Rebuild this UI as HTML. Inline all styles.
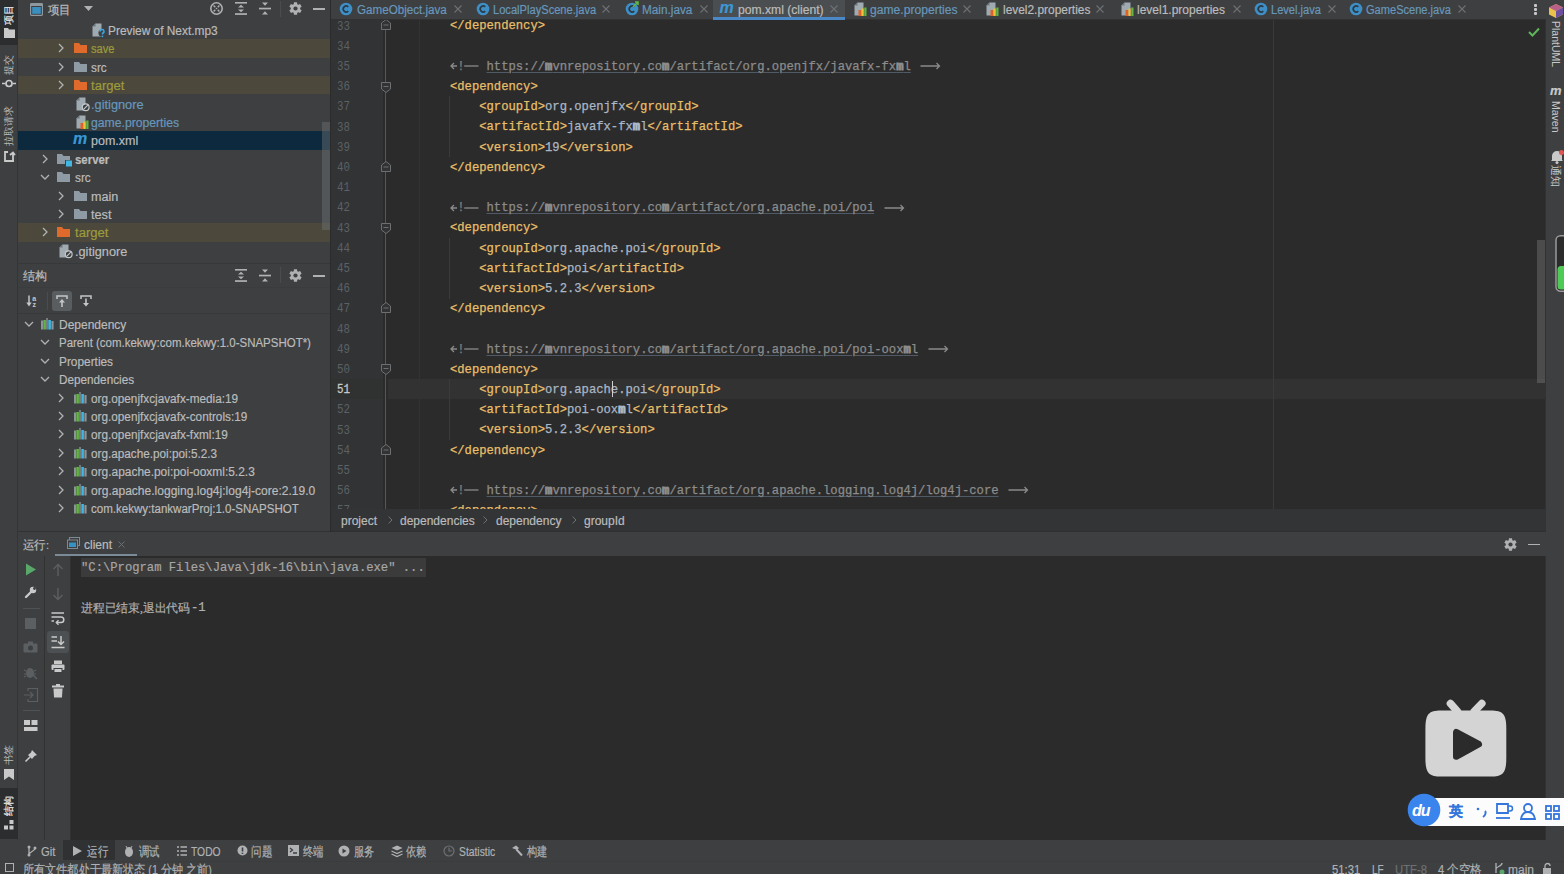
<!DOCTYPE html><html><head><meta charset="utf-8"><style>
html,body{margin:0;padding:0;}
body{width:1564px;height:874px;overflow:hidden;position:relative;background:#2b2b2b;font-family:'Liberation Sans', sans-serif;}
.t{position:absolute;white-space:pre;line-height:18px;-webkit-text-stroke:0.2px currentColor;}
svg{overflow:visible}
.mb{-webkit-text-stroke:1.1px currentColor;}
</style></head><body>
<div style="position:absolute;left:0px;top:0px;width:18px;height:840px;background:#3d3f41;"></div>
<div style="position:absolute;left:17px;top:0px;width:1px;height:840px;background:#333537;"></div>
<div style="position:absolute;left:0px;top:0px;width:18px;height:45px;background:#2b2d2f;"></div>
<div style="position:absolute;left:0px;top:788px;width:18px;height:51px;background:#2b2d2f;"></div>
<div style="position:absolute;left:18px;top:0px;width:312px;height:532px;background:#3d3f41;"></div>
<div style="position:absolute;left:330px;top:0px;width:1px;height:532px;background:#2b2b2b;"></div>
<div style="position:absolute;left:1546px;top:0px;width:18px;height:840px;background:#3d3f41;"></div>
<div style="position:absolute;left:1545px;top:0px;width:1px;height:840px;background:#323232;"></div>
<div style="position:absolute;left:331px;top:0px;width:1215px;height:20px;background:#3d3f41;"></div>
<div style="position:absolute;left:331px;top:19px;width:1215px;height:1px;background:#323232;"></div>
<div style="position:absolute;left:331px;top:20px;width:52px;height:489px;background:#313335;"></div>
<div style="position:absolute;left:419px;top:20px;width:1px;height:489px;background:#333333;"></div>
<div style="position:absolute;left:331px;top:509px;width:1215px;height:23px;background:#323436;"></div>
<div style="position:absolute;left:18px;top:532px;width:1528px;height:24px;background:#3d3f41;"></div>
<div style="position:absolute;left:18px;top:531px;width:312px;height:1px;background:#303234;"></div>
<div style="position:absolute;left:331px;top:531px;width:1215px;height:1px;background:#2e3032;"></div>
<div style="position:absolute;left:18px;top:556px;width:26px;height:284px;background:#3d3f41;"></div>
<div style="position:absolute;left:44px;top:556px;width:27px;height:284px;background:#3d3f41;"></div>
<div style="position:absolute;left:44px;top:556px;width:1px;height:284px;background:#323232;"></div>
<div style="position:absolute;left:70px;top:556px;width:1px;height:284px;background:#323232;"></div>
<div style="position:absolute;left:0px;top:840px;width:1564px;height:20px;background:#3d3f41;"></div>
<div style="position:absolute;left:0px;top:860px;width:1564px;height:14px;background:#3d3f41;"></div>
<div style="position:absolute;left:0px;top:861px;width:1564px;height:1px;background:#3a3c3e;"></div>
<svg style="position:absolute;left:30px;top:3px" width="13" height="13" viewBox="0 0 13 13"><rect x="0.6" y="0.6" width="11.8" height="11.8" rx="0.8" fill="none" stroke="#8f989e" stroke-width="1.2"/><rect x="1" y="1" width="11" height="2" fill="#8f989e"/><rect x="2.2" y="4" width="8.6" height="6.8" fill="#3a8fc0"/></svg>
<div class="t" style="left:48px;top:1px;color:#bbbbbb;font-size:11.5px;font-family:'Liberation Sans', sans-serif;font-weight:normal;transform:scaleX(0.9565);transform-origin:0 0;">项目</div>
<svg style="position:absolute;left:84px;top:6px" width="9" height="5" viewBox="0 0 9 5"><path d="M0 0 H9 L4.5 5 Z" fill="#afb1b3"/></svg>
<svg style="position:absolute;left:210.1px;top:2.0px" width="13" height="13" viewBox="0 0 13 13"><circle cx="6.5" cy="6.5" r="5.7" fill="none" stroke="#afb1b3" stroke-width="1.6"/><path d="M3.6 3.6 L5.3 5.3 M9.4 3.6 L7.7 5.3 M3.6 9.4 L5.3 7.7 M9.4 9.4 L7.7 7.7" stroke="#afb1b3" stroke-width="1.4"/><circle cx="6.5" cy="6.5" r="0.8" fill="#afb1b3"/></svg>
<svg style="position:absolute;left:235px;top:2.3000000000000007px" width="12" height="13" viewBox="0 0 12 13"><rect x="0" y="0" width="12" height="1.6" fill="#afb1b3"/><rect x="0" y="11.2" width="12" height="1.7" fill="#afb1b3"/><path d="M3 5.6 L6 2.8 L9 5.6 Z M3 7.4 L6 10.2 L9 7.4 Z" fill="#afb1b3"/></svg>
<svg style="position:absolute;left:259px;top:2.0px" width="12" height="13" viewBox="0 0 12 13"><rect x="0" y="5.7" width="12" height="1.7" fill="#afb1b3"/><path d="M3 0.5 L9 0.5 L6 3.8 Z M3 12.5 L9 12.5 L6 9.2 Z" fill="#afb1b3"/></svg>
<div style="position:absolute;left:280px;top:1px;width:1px;height:16px;background:#4a4c4e;"></div>
<svg style="position:absolute;left:288.5px;top:2.0px" width="13" height="13" viewBox="0 0 13 13"><path d="M4.95 0.29 L8.05 0.29 L8.26 2.14 L9.39 2.80 L11.10 2.05 L12.65 4.74 L11.15 5.85 L11.15 7.15 L12.65 8.26 L11.10 10.95 L9.39 10.20 L8.26 10.86 L8.05 12.71 L4.95 12.71 L4.74 10.86 L3.61 10.20 L1.90 10.95 L0.35 8.26 L1.85 7.15 L1.85 5.85 L0.35 4.74 L1.90 2.05 L3.61 2.80 L4.74 2.14 Z" fill="#afb1b3"/><circle cx="6.5" cy="6.5" r="2.1" fill="#3d3f41"/></svg>
<div style="position:absolute;left:313px;top:8.0px;width:12px;height:1.7px;background:#afb1b3;"></div>
<svg style="position:absolute;left:92px;top:23.0px" width="14" height="14" viewBox="0 0 14 14"><path d="M0.5 3.5 L3.5 0.5 H9.5 V13.5 H0.5 Z" fill="#a0aab1"/><path d="M0.5 3.5 H3.5 V0.5 Z" fill="#6c757b"/><circle cx="10" cy="10" r="3.6" fill="#3d3f41"/><path d="M8.2 8.6 A1.9 1.9 0 1 1 10.5 10.3 V11.5" stroke="#3ba6e0" stroke-width="1.5" fill="none"/><circle cx="10.5" cy="13.3" r="0.9" fill="#3ba6e0"/></svg>
<div class="t" style="left:107.5px;top:22.0px;color:#bbbbbb;font-size:12.5px;font-family:'Liberation Sans', sans-serif;font-weight:normal;transform:scaleX(0.9508);transform-origin:0 0;">Preview of Next.mp3</div>
<div style="position:absolute;left:18px;top:39.20px;width:312px;height:18.4px;background:#4c493c;"></div>
<svg style="position:absolute;left:57px;top:43.4px" width="8" height="10" viewBox="0 0 8 10"><path d="M2 1 L6 5 L2 9" stroke="#afb1b3" stroke-width="1.3" fill="none"/></svg>
<svg style="position:absolute;left:74px;top:43.4px" width="14" height="11" viewBox="0 0 14 11"><path d="M0 0 H5 L6.5 2 H13 V10 H0 Z" fill="#e06a2c"/></svg>
<div class="t" style="left:91.1px;top:40.4px;color:#9d9b3c;font-size:12.5px;font-family:'Liberation Sans', sans-serif;font-weight:normal;transform:scaleX(0.8856);transform-origin:0 0;">save</div>
<svg style="position:absolute;left:57px;top:61.8px" width="8" height="10" viewBox="0 0 8 10"><path d="M2 1 L6 5 L2 9" stroke="#afb1b3" stroke-width="1.3" fill="none"/></svg>
<svg style="position:absolute;left:74px;top:61.8px" width="14" height="11" viewBox="0 0 14 11"><path d="M0 0 H5 L6.5 2 H13 V10 H0 Z" fill="#8f9ba4"/></svg>
<div class="t" style="left:91.1px;top:58.8px;color:#bbbbbb;font-size:12.5px;font-family:'Liberation Sans', sans-serif;font-weight:normal;transform:scaleX(0.9444);transform-origin:0 0;">src</div>
<div style="position:absolute;left:18px;top:76.00px;width:312px;height:18.4px;background:#4c493c;"></div>
<svg style="position:absolute;left:57px;top:80.19999999999999px" width="8" height="10" viewBox="0 0 8 10"><path d="M2 1 L6 5 L2 9" stroke="#afb1b3" stroke-width="1.3" fill="none"/></svg>
<svg style="position:absolute;left:74px;top:80.19999999999999px" width="14" height="11" viewBox="0 0 14 11"><path d="M0 0 H5 L6.5 2 H13 V10 H0 Z" fill="#e06a2c"/></svg>
<div class="t" style="left:91.1px;top:77.19999999999999px;color:#9d9b3c;font-size:12.5px;font-family:'Liberation Sans', sans-serif;font-weight:normal;transform:scaleX(1.0462);transform-origin:0 0;">target</div>
<svg style="position:absolute;left:76px;top:96.6px" width="14" height="14" viewBox="0 0 14 14"><path d="M0.5 3.5 L3.5 0.5 H9.5 V13.5 H0.5 Z" fill="#a0aab1"/><path d="M0.5 3.5 H3.5 V0.5 Z" fill="#6c757b"/><circle cx="9.7" cy="10.3" r="3.4" fill="#3d3f41" stroke="#c3c9cd" stroke-width="1.2"/><path d="M7.6 12.4 L11.8 8.2" stroke="#c3c9cd" stroke-width="1.1"/></svg>
<div class="t" style="left:91.1px;top:95.6px;color:#6897bb;font-size:12.5px;font-family:'Liberation Sans', sans-serif;font-weight:normal;transform:scaleX(1.0230);transform-origin:0 0;">.gitignore</div>
<svg style="position:absolute;left:76px;top:115.0px" width="14" height="14" viewBox="0 0 14 14"><path d="M0.5 3.5 L3.5 0.5 H9.5 V13.5 H0.5 Z" fill="#a0aab1"/><path d="M0.5 3.5 H3.5 V0.5 Z" fill="#6c757b"/><rect x="4.5" y="8" width="3" height="6" fill="#e0622a"/><rect x="7.5" y="6.5" width="2.2" height="7.5" fill="#e8c43c"/><rect x="10.2" y="5.5" width="2.3" height="8.5" fill="#62b543"/></svg>
<div class="t" style="left:91.1px;top:114.0px;color:#6897bb;font-size:12.5px;font-family:'Liberation Sans', sans-serif;font-weight:normal;transform:scaleX(0.9751);transform-origin:0 0;">game.properties</div>
<div style="position:absolute;left:18px;top:131.20px;width:312px;height:18.4px;background:#0d293e;"></div>
<div class="t" style="left:73px;top:130.39999999999998px;color:#3a98d4;font-size:16px;font-family:'Liberation Sans', sans-serif;font-style:italic;font-weight:bold;letter-spacing:-1px">m</div>
<div class="t" style="left:91.1px;top:132.39999999999998px;color:#bbbbbb;font-size:12.5px;font-family:'Liberation Sans', sans-serif;font-weight:normal;transform:scaleX(1.0014);transform-origin:0 0;">pom.xml</div>
<svg style="position:absolute;left:41px;top:153.79999999999998px" width="8" height="10" viewBox="0 0 8 10"><path d="M2 1 L6 5 L2 9" stroke="#afb1b3" stroke-width="1.3" fill="none"/></svg>
<svg style="position:absolute;left:57px;top:153.79999999999998px" width="14" height="11" viewBox="0 0 14 11"><path d="M0 0 H5 L6.5 2 H13 V10 H0 Z" fill="#8f9ba4"/></svg>
<svg style="position:absolute;left:64.5px;top:159.99999999999997px" width="8" height="8" viewBox="0 0 8 8"><rect x="0" y="0" width="7.5" height="7" fill="#3d3f41"/><rect x="1" y="0.5" width="6" height="6" fill="#40b6e0"/></svg>
<div class="t" style="left:74.7px;top:150.79999999999998px;color:#bbbbbb;font-size:12.5px;font-family:'Liberation Sans', sans-serif;font-weight:bold;transform:scaleX(0.9139);transform-origin:0 0;">server</div>
<svg style="position:absolute;left:40px;top:173.2px" width="10" height="8" viewBox="0 0 10 8"><path d="M1 2 L5 6 L9 2" stroke="#afb1b3" stroke-width="1.3" fill="none"/></svg>
<svg style="position:absolute;left:57px;top:172.2px" width="14" height="11" viewBox="0 0 14 11"><path d="M0 0 H5 L6.5 2 H13 V10 H0 Z" fill="#8f9ba4"/></svg>
<div class="t" style="left:74.7px;top:169.2px;color:#bbbbbb;font-size:12.5px;font-family:'Liberation Sans', sans-serif;font-weight:normal;transform:scaleX(0.9444);transform-origin:0 0;">src</div>
<svg style="position:absolute;left:57px;top:190.6px" width="8" height="10" viewBox="0 0 8 10"><path d="M2 1 L6 5 L2 9" stroke="#afb1b3" stroke-width="1.3" fill="none"/></svg>
<svg style="position:absolute;left:74px;top:190.6px" width="14" height="11" viewBox="0 0 14 11"><path d="M0 0 H5 L6.5 2 H13 V10 H0 Z" fill="#8f9ba4"/></svg>
<div class="t" style="left:91.1px;top:187.6px;color:#bbbbbb;font-size:12.5px;font-family:'Liberation Sans', sans-serif;font-weight:normal;transform:scaleX(1.0079);transform-origin:0 0;">main</div>
<svg style="position:absolute;left:57px;top:209.0px" width="8" height="10" viewBox="0 0 8 10"><path d="M2 1 L6 5 L2 9" stroke="#afb1b3" stroke-width="1.3" fill="none"/></svg>
<svg style="position:absolute;left:74px;top:209.0px" width="14" height="11" viewBox="0 0 14 11"><path d="M0 0 H5 L6.5 2 H13 V10 H0 Z" fill="#8f9ba4"/></svg>
<div class="t" style="left:91.1px;top:206.0px;color:#bbbbbb;font-size:12.5px;font-family:'Liberation Sans', sans-serif;font-weight:normal;transform:scaleX(1.0179);transform-origin:0 0;">test</div>
<div style="position:absolute;left:18px;top:223.20px;width:312px;height:18.4px;background:#4c493c;"></div>
<svg style="position:absolute;left:41px;top:227.39999999999998px" width="8" height="10" viewBox="0 0 8 10"><path d="M2 1 L6 5 L2 9" stroke="#afb1b3" stroke-width="1.3" fill="none"/></svg>
<svg style="position:absolute;left:57px;top:227.39999999999998px" width="14" height="11" viewBox="0 0 14 11"><path d="M0 0 H5 L6.5 2 H13 V10 H0 Z" fill="#e06a2c"/></svg>
<div class="t" style="left:74.7px;top:224.39999999999998px;color:#9d9b3c;font-size:12.5px;font-family:'Liberation Sans', sans-serif;font-weight:normal;transform:scaleX(1.0462);transform-origin:0 0;">target</div>
<svg style="position:absolute;left:59px;top:243.79999999999998px" width="14" height="14" viewBox="0 0 14 14"><path d="M0.5 3.5 L3.5 0.5 H9.5 V13.5 H0.5 Z" fill="#a0aab1"/><path d="M0.5 3.5 H3.5 V0.5 Z" fill="#6c757b"/><circle cx="9.7" cy="10.3" r="3.4" fill="#3d3f41" stroke="#c3c9cd" stroke-width="1.2"/><path d="M7.6 12.4 L11.8 8.2" stroke="#c3c9cd" stroke-width="1.1"/></svg>
<div class="t" style="left:74.7px;top:242.79999999999998px;color:#bbbbbb;font-size:12.5px;font-family:'Liberation Sans', sans-serif;font-weight:normal;transform:scaleX(1.0171);transform-origin:0 0;">.gitignore</div>
<div style="position:absolute;left:322px;top:122px;width:8px;height:108px;background:rgba(110,115,118,0.45);"></div>
<div style="position:absolute;left:18px;top:263px;width:312px;height:1px;background:#363839;"></div>
<div style="position:absolute;left:18px;top:287px;width:312px;height:1px;background:#3a3c3e;"></div>
<div class="t" style="left:23px;top:267px;color:#bbbbbb;font-size:11.5px;font-family:'Liberation Sans', sans-serif;font-weight:normal;transform:scaleX(1.0000);transform-origin:0 0;">结构</div>
<svg style="position:absolute;left:235px;top:269.3px" width="12" height="13" viewBox="0 0 12 13"><rect x="0" y="0" width="12" height="1.6" fill="#afb1b3"/><rect x="0" y="11.2" width="12" height="1.7" fill="#afb1b3"/><path d="M3 5.6 L6 2.8 L9 5.6 Z M3 7.4 L6 10.2 L9 7.4 Z" fill="#afb1b3"/></svg>
<svg style="position:absolute;left:259px;top:269.0px" width="12" height="13" viewBox="0 0 12 13"><rect x="0" y="5.7" width="12" height="1.7" fill="#afb1b3"/><path d="M3 0.5 L9 0.5 L6 3.8 Z M3 12.5 L9 12.5 L6 9.2 Z" fill="#afb1b3"/></svg>
<div style="position:absolute;left:280px;top:267px;width:1px;height:16px;background:#4a4c4e;"></div>
<svg style="position:absolute;left:288.5px;top:269.0px" width="13" height="13" viewBox="0 0 13 13"><path d="M4.95 0.29 L8.05 0.29 L8.26 2.14 L9.39 2.80 L11.10 2.05 L12.65 4.74 L11.15 5.85 L11.15 7.15 L12.65 8.26 L11.10 10.95 L9.39 10.20 L8.26 10.86 L8.05 12.71 L4.95 12.71 L4.74 10.86 L3.61 10.20 L1.90 10.95 L0.35 8.26 L1.85 7.15 L1.85 5.85 L0.35 4.74 L1.90 2.05 L3.61 2.80 L4.74 2.14 Z" fill="#afb1b3"/><circle cx="6.5" cy="6.5" r="2.1" fill="#3d3f41"/></svg>
<div style="position:absolute;left:313px;top:275.0px;width:12px;height:1.7px;background:#afb1b3;"></div>
<div style="position:absolute;left:18px;top:313px;width:312px;height:1px;background:#37393b;"></div>
<svg style="position:absolute;left:25.5px;top:295px" width="13" height="13" viewBox="0 0 13 13"><path d="M3 0.5 V9.5" stroke="#c4c6c8" stroke-width="1.5"/><path d="M0.3 7.5 L3 11.5 L5.7 7.5 Z" fill="#c4c6c8"/><text x="6.3" y="5.6" font-size="7" font-weight="bold" fill="#c4c6c8" font-family="Liberation Sans">a</text><text x="6.5" y="12" font-size="7" font-weight="bold" fill="#c4c6c8" font-family="Liberation Sans">z</text></svg>
<div style="position:absolute;left:47px;top:292px;width:1px;height:18px;background:#4a4c4e;"></div>
<div style="position:absolute;left:52px;top:291px;width:20px;height:20px;background:#5a5d60;border-radius:3px;"></div>
<svg style="position:absolute;left:56px;top:295px" width="12" height="12" viewBox="0 0 12 12"><path d="M1 4 V1 H11 V4" stroke="#c4c6c8" stroke-width="1.5" fill="none"/><path d="M6 12 V5.5" stroke="#c4c6c8" stroke-width="1.6"/><path d="M3 7.5 L6 4 L9 7.5 Z" fill="#c4c6c8"/></svg>
<svg style="position:absolute;left:80px;top:295px" width="12" height="12" viewBox="0 0 12 12"><path d="M1 4 V1 H11 V4" stroke="#c4c6c8" stroke-width="1.5" fill="none"/><path d="M6 3.5 V9" stroke="#c4c6c8" stroke-width="1.6"/><path d="M3 8 L6 11.5 L9 8 Z" fill="#c4c6c8"/></svg>
<svg style="position:absolute;left:24px;top:320.0px" width="10" height="8" viewBox="0 0 10 8"><path d="M1 2 L5 6 L9 2" stroke="#afb1b3" stroke-width="1.3" fill="none"/></svg>
<svg style="position:absolute;left:41px;top:318.0px" width="13" height="12" viewBox="0 0 13 12"><rect x="0" y="2.5" width="2" height="9" fill="#8a9499"/><rect x="2.3" y="2" width="2.6" height="9.5" fill="#62b543"/><rect x="5.4" y="0" width="1.2" height="11.5" fill="#9aa5aa"/><rect x="7.3" y="2" width="2.6" height="9.5" fill="#40b6e0"/><rect x="10.4" y="3" width="2.2" height="8.5" fill="#8a9499"/></svg>
<div class="t" style="left:58.7px;top:316.0px;color:#bbbbbb;font-size:12.5px;font-family:'Liberation Sans', sans-serif;font-weight:normal;transform:scaleX(0.9595);transform-origin:0 0;">Dependency</div>
<svg style="position:absolute;left:40px;top:338.4px" width="10" height="8" viewBox="0 0 10 8"><path d="M1 2 L5 6 L9 2" stroke="#afb1b3" stroke-width="1.3" fill="none"/></svg>
<div class="t" style="left:58.7px;top:334.4px;color:#bbbbbb;font-size:12.5px;font-family:'Liberation Sans', sans-serif;font-weight:normal;transform:scaleX(0.9182);transform-origin:0 0;">Parent (com.kekwy:com.kekwy:1.0-SNAPSHOT*)</div>
<svg style="position:absolute;left:40px;top:356.8px" width="10" height="8" viewBox="0 0 10 8"><path d="M1 2 L5 6 L9 2" stroke="#afb1b3" stroke-width="1.3" fill="none"/></svg>
<div class="t" style="left:58.7px;top:352.8px;color:#bbbbbb;font-size:12.5px;font-family:'Liberation Sans', sans-serif;font-weight:normal;transform:scaleX(0.9485);transform-origin:0 0;">Properties</div>
<svg style="position:absolute;left:40px;top:375.2px" width="10" height="8" viewBox="0 0 10 8"><path d="M1 2 L5 6 L9 2" stroke="#afb1b3" stroke-width="1.3" fill="none"/></svg>
<div class="t" style="left:58.7px;top:371.2px;color:#bbbbbb;font-size:12.5px;font-family:'Liberation Sans', sans-serif;font-weight:normal;transform:scaleX(0.9389);transform-origin:0 0;">Dependencies</div>
<svg style="position:absolute;left:57px;top:392.6px" width="8" height="10" viewBox="0 0 8 10"><path d="M2 1 L6 5 L2 9" stroke="#afb1b3" stroke-width="1.3" fill="none"/></svg>
<svg style="position:absolute;left:74px;top:391.6px" width="13" height="12" viewBox="0 0 13 12"><rect x="0" y="2.5" width="2" height="9" fill="#8a9499"/><rect x="2.3" y="2" width="2.6" height="9.5" fill="#62b543"/><rect x="5.4" y="0" width="1.2" height="11.5" fill="#9aa5aa"/><rect x="7.3" y="2" width="2.6" height="9.5" fill="#40b6e0"/><rect x="10.4" y="3" width="2.2" height="8.5" fill="#8a9499"/></svg>
<div class="t" style="left:91.1px;top:389.6px;color:#bbbbbb;font-size:12.5px;font-family:'Liberation Sans', sans-serif;font-weight:normal;transform:scaleX(0.9405);transform-origin:0 0;">org.openjfxcjavafx-media:19</div>
<svg style="position:absolute;left:57px;top:411.0px" width="8" height="10" viewBox="0 0 8 10"><path d="M2 1 L6 5 L2 9" stroke="#afb1b3" stroke-width="1.3" fill="none"/></svg>
<svg style="position:absolute;left:74px;top:410.0px" width="13" height="12" viewBox="0 0 13 12"><rect x="0" y="2.5" width="2" height="9" fill="#8a9499"/><rect x="2.3" y="2" width="2.6" height="9.5" fill="#62b543"/><rect x="5.4" y="0" width="1.2" height="11.5" fill="#9aa5aa"/><rect x="7.3" y="2" width="2.6" height="9.5" fill="#40b6e0"/><rect x="10.4" y="3" width="2.2" height="8.5" fill="#8a9499"/></svg>
<div class="t" style="left:91.1px;top:408.0px;color:#bbbbbb;font-size:12.5px;font-family:'Liberation Sans', sans-serif;font-weight:normal;transform:scaleX(0.9409);transform-origin:0 0;">org.openjfxcjavafx-controls:19</div>
<svg style="position:absolute;left:57px;top:429.4px" width="8" height="10" viewBox="0 0 8 10"><path d="M2 1 L6 5 L2 9" stroke="#afb1b3" stroke-width="1.3" fill="none"/></svg>
<svg style="position:absolute;left:74px;top:428.4px" width="13" height="12" viewBox="0 0 13 12"><rect x="0" y="2.5" width="2" height="9" fill="#8a9499"/><rect x="2.3" y="2" width="2.6" height="9.5" fill="#62b543"/><rect x="5.4" y="0" width="1.2" height="11.5" fill="#9aa5aa"/><rect x="7.3" y="2" width="2.6" height="9.5" fill="#40b6e0"/><rect x="10.4" y="3" width="2.2" height="8.5" fill="#8a9499"/></svg>
<div class="t" style="left:91.1px;top:426.4px;color:#bbbbbb;font-size:12.5px;font-family:'Liberation Sans', sans-serif;font-weight:normal;transform:scaleX(0.9424);transform-origin:0 0;">org.openjfxcjavafx-fxml:19</div>
<svg style="position:absolute;left:57px;top:447.79999999999995px" width="8" height="10" viewBox="0 0 8 10"><path d="M2 1 L6 5 L2 9" stroke="#afb1b3" stroke-width="1.3" fill="none"/></svg>
<svg style="position:absolute;left:74px;top:446.79999999999995px" width="13" height="12" viewBox="0 0 13 12"><rect x="0" y="2.5" width="2" height="9" fill="#8a9499"/><rect x="2.3" y="2" width="2.6" height="9.5" fill="#62b543"/><rect x="5.4" y="0" width="1.2" height="11.5" fill="#9aa5aa"/><rect x="7.3" y="2" width="2.6" height="9.5" fill="#40b6e0"/><rect x="10.4" y="3" width="2.2" height="8.5" fill="#8a9499"/></svg>
<div class="t" style="left:91.1px;top:444.79999999999995px;color:#bbbbbb;font-size:12.5px;font-family:'Liberation Sans', sans-serif;font-weight:normal;transform:scaleX(0.9396);transform-origin:0 0;">org.apache.poi:poi:5.2.3</div>
<svg style="position:absolute;left:57px;top:466.2px" width="8" height="10" viewBox="0 0 8 10"><path d="M2 1 L6 5 L2 9" stroke="#afb1b3" stroke-width="1.3" fill="none"/></svg>
<svg style="position:absolute;left:74px;top:465.2px" width="13" height="12" viewBox="0 0 13 12"><rect x="0" y="2.5" width="2" height="9" fill="#8a9499"/><rect x="2.3" y="2" width="2.6" height="9.5" fill="#62b543"/><rect x="5.4" y="0" width="1.2" height="11.5" fill="#9aa5aa"/><rect x="7.3" y="2" width="2.6" height="9.5" fill="#40b6e0"/><rect x="10.4" y="3" width="2.2" height="8.5" fill="#8a9499"/></svg>
<div class="t" style="left:91.1px;top:463.2px;color:#bbbbbb;font-size:12.5px;font-family:'Liberation Sans', sans-serif;font-weight:normal;transform:scaleX(0.9541);transform-origin:0 0;">org.apache.poi:poi-ooxml:5.2.3</div>
<svg style="position:absolute;left:57px;top:484.6px" width="8" height="10" viewBox="0 0 8 10"><path d="M2 1 L6 5 L2 9" stroke="#afb1b3" stroke-width="1.3" fill="none"/></svg>
<svg style="position:absolute;left:74px;top:483.6px" width="13" height="12" viewBox="0 0 13 12"><rect x="0" y="2.5" width="2" height="9" fill="#8a9499"/><rect x="2.3" y="2" width="2.6" height="9.5" fill="#62b543"/><rect x="5.4" y="0" width="1.2" height="11.5" fill="#9aa5aa"/><rect x="7.3" y="2" width="2.6" height="9.5" fill="#40b6e0"/><rect x="10.4" y="3" width="2.2" height="8.5" fill="#8a9499"/></svg>
<div class="t" style="left:91.1px;top:481.6px;color:#bbbbbb;font-size:12.5px;font-family:'Liberation Sans', sans-serif;font-weight:normal;transform:scaleX(0.9633);transform-origin:0 0;">org.apache.logging.log4j:log4j-core:2.19.0</div>
<svg style="position:absolute;left:57px;top:503.0px" width="8" height="10" viewBox="0 0 8 10"><path d="M2 1 L6 5 L2 9" stroke="#afb1b3" stroke-width="1.3" fill="none"/></svg>
<svg style="position:absolute;left:74px;top:502.0px" width="13" height="12" viewBox="0 0 13 12"><rect x="0" y="2.5" width="2" height="9" fill="#8a9499"/><rect x="2.3" y="2" width="2.6" height="9.5" fill="#62b543"/><rect x="5.4" y="0" width="1.2" height="11.5" fill="#9aa5aa"/><rect x="7.3" y="2" width="2.6" height="9.5" fill="#40b6e0"/><rect x="10.4" y="3" width="2.2" height="8.5" fill="#8a9499"/></svg>
<div class="t" style="left:91.1px;top:500.0px;color:#bbbbbb;font-size:12.5px;font-family:'Liberation Sans', sans-serif;font-weight:normal;transform:scaleX(0.9234);transform-origin:0 0;">com.kekwy:tankwarProj:1.0-SNAPSHOT</div>
<div style="position:absolute;left:713px;top:0px;width:132px;height:20px;background:#4b4e50;"></div>
<div style="position:absolute;left:713px;top:17px;width:132px;height:3px;background:#4a88c7;"></div>
<svg style="position:absolute;left:339px;top:2px" width="14" height="14" viewBox="0 0 14 14"><circle cx="7" cy="7" r="6.3" fill="#3d8fc6"/><path d="M9.3 4.8 A3 3 0 1 0 9.3 9.2" stroke="#2b3a45" stroke-width="1.6" fill="none"/></svg>
<div class="t" style="left:357.1px;top:1px;color:#6897bb;font-size:12px;font-family:'Liberation Sans', sans-serif;font-weight:normal;transform:scaleX(0.9682);transform-origin:0 0;">GameObject.java</div>
<svg style="position:absolute;left:454px;top:5px" width="8" height="8" viewBox="0 0 8 8"><path d="M0.5 0.5 L7.5 7.5 M7.5 0.5 L0.5 7.5" stroke="#6e7173" stroke-width="1.1"/></svg>
<svg style="position:absolute;left:476px;top:2px" width="14" height="14" viewBox="0 0 14 14"><circle cx="7" cy="7" r="6.3" fill="#3d8fc6"/><path d="M9.3 4.8 A3 3 0 1 0 9.3 9.2" stroke="#2b3a45" stroke-width="1.6" fill="none"/></svg>
<div class="t" style="left:493.2px;top:1px;color:#6897bb;font-size:12px;font-family:'Liberation Sans', sans-serif;font-weight:normal;transform:scaleX(0.9266);transform-origin:0 0;">LocalPlayScene.java</div>
<svg style="position:absolute;left:602.4px;top:5px" width="8" height="8" viewBox="0 0 8 8"><path d="M0.5 0.5 L7.5 7.5 M7.5 0.5 L0.5 7.5" stroke="#6e7173" stroke-width="1.1"/></svg>
<svg style="position:absolute;left:625px;top:2px" width="14" height="14" viewBox="0 0 14 14"><circle cx="7" cy="7" r="6.3" fill="#3d8fc6"/><path d="M9.3 4.8 A3 3 0 1 0 9.3 9.2" stroke="#2b3a45" stroke-width="1.6" fill="none"/></svg>
<svg style="position:absolute;left:632px;top:1px" width="7" height="7" viewBox="0 0 7 7"><path d="M1 6 L6 1 M3 1 H6 V4" stroke="#62b543" stroke-width="1.6" fill="none"/></svg>
<div class="t" style="left:642.0px;top:1px;color:#6897bb;font-size:12px;font-family:'Liberation Sans', sans-serif;font-weight:normal;transform:scaleX(0.9809);transform-origin:0 0;">Main.java</div>
<svg style="position:absolute;left:699.6px;top:5px" width="8" height="8" viewBox="0 0 8 8"><path d="M0.5 0.5 L7.5 7.5 M7.5 0.5 L0.5 7.5" stroke="#6e7173" stroke-width="1.1"/></svg>
<div class="t" style="left:719.5px;top:-1px;color:#3a98d4;font-size:16px;font-family:'Liberation Sans', sans-serif;font-style:italic;font-weight:bold;letter-spacing:-1px">m</div>
<div class="t" style="left:738.4px;top:1px;color:#bbbbbb;font-size:12px;font-family:'Liberation Sans', sans-serif;font-weight:normal;transform:scaleX(1.0109);transform-origin:0 0;">pom.xml (client)</div>
<svg style="position:absolute;left:830.4px;top:5px" width="8" height="8" viewBox="0 0 8 8"><path d="M0.5 0.5 L7.5 7.5 M7.5 0.5 L0.5 7.5" stroke="#6e7173" stroke-width="1.1"/></svg>
<svg style="position:absolute;left:854px;top:2px" width="14" height="14" viewBox="0 0 14 14"><path d="M0.5 3.5 L3.5 0.5 H9.5 V13.5 H0.5 Z" fill="#a0aab1"/><path d="M0.5 3.5 H3.5 V0.5 Z" fill="#6c757b"/><rect x="4.5" y="8" width="3" height="6" fill="#e0622a"/><rect x="7.5" y="6.5" width="2.2" height="7.5" fill="#e8c43c"/><rect x="10.2" y="5.5" width="2.3" height="8.5" fill="#62b543"/></svg>
<div class="t" style="left:869.5px;top:1px;color:#6897bb;font-size:12px;font-family:'Liberation Sans', sans-serif;font-weight:normal;transform:scaleX(1.0091);transform-origin:0 0;">game.properties</div>
<svg style="position:absolute;left:963.4px;top:5px" width="8" height="8" viewBox="0 0 8 8"><path d="M0.5 0.5 L7.5 7.5 M7.5 0.5 L0.5 7.5" stroke="#6e7173" stroke-width="1.1"/></svg>
<svg style="position:absolute;left:986px;top:2px" width="14" height="14" viewBox="0 0 14 14"><path d="M0.5 3.5 L3.5 0.5 H9.5 V13.5 H0.5 Z" fill="#a0aab1"/><path d="M0.5 3.5 H3.5 V0.5 Z" fill="#6c757b"/><rect x="4.5" y="8" width="3" height="6" fill="#e0622a"/><rect x="7.5" y="6.5" width="2.2" height="7.5" fill="#e8c43c"/><rect x="10.2" y="5.5" width="2.3" height="8.5" fill="#62b543"/></svg>
<div class="t" style="left:1003.1px;top:1px;color:#bbbbbb;font-size:12px;font-family:'Liberation Sans', sans-serif;font-weight:normal;transform:scaleX(0.9924);transform-origin:0 0;">level2.properties</div>
<svg style="position:absolute;left:1095.5px;top:5px" width="8" height="8" viewBox="0 0 8 8"><path d="M0.5 0.5 L7.5 7.5 M7.5 0.5 L0.5 7.5" stroke="#6e7173" stroke-width="1.1"/></svg>
<svg style="position:absolute;left:1121px;top:2px" width="14" height="14" viewBox="0 0 14 14"><path d="M0.5 3.5 L3.5 0.5 H9.5 V13.5 H0.5 Z" fill="#a0aab1"/><path d="M0.5 3.5 H3.5 V0.5 Z" fill="#6c757b"/><rect x="4.5" y="8" width="3" height="6" fill="#e0622a"/><rect x="7.5" y="6.5" width="2.2" height="7.5" fill="#e8c43c"/><rect x="10.2" y="5.5" width="2.3" height="8.5" fill="#62b543"/></svg>
<div class="t" style="left:1137.1px;top:1px;color:#bbbbbb;font-size:12px;font-family:'Liberation Sans', sans-serif;font-weight:normal;transform:scaleX(0.9993);transform-origin:0 0;">level1.properties</div>
<svg style="position:absolute;left:1232.5px;top:5px" width="8" height="8" viewBox="0 0 8 8"><path d="M0.5 0.5 L7.5 7.5 M7.5 0.5 L0.5 7.5" stroke="#6e7173" stroke-width="1.1"/></svg>
<svg style="position:absolute;left:1254px;top:2px" width="14" height="14" viewBox="0 0 14 14"><circle cx="7" cy="7" r="6.3" fill="#3d8fc6"/><path d="M9.3 4.8 A3 3 0 1 0 9.3 9.2" stroke="#2b3a45" stroke-width="1.6" fill="none"/></svg>
<div class="t" style="left:1270.9px;top:1px;color:#6897bb;font-size:12px;font-family:'Liberation Sans', sans-serif;font-weight:normal;transform:scaleX(0.9237);transform-origin:0 0;">Level.java</div>
<svg style="position:absolute;left:1327.6px;top:5px" width="8" height="8" viewBox="0 0 8 8"><path d="M0.5 0.5 L7.5 7.5 M7.5 0.5 L0.5 7.5" stroke="#6e7173" stroke-width="1.1"/></svg>
<svg style="position:absolute;left:1349px;top:2px" width="14" height="14" viewBox="0 0 14 14"><circle cx="7" cy="7" r="6.3" fill="#3d8fc6"/><path d="M9.3 4.8 A3 3 0 1 0 9.3 9.2" stroke="#2b3a45" stroke-width="1.6" fill="none"/></svg>
<div class="t" style="left:1366.3px;top:1px;color:#6897bb;font-size:12px;font-family:'Liberation Sans', sans-serif;font-weight:normal;transform:scaleX(0.9224);transform-origin:0 0;">GameScene.java</div>
<svg style="position:absolute;left:1458px;top:5px" width="8" height="8" viewBox="0 0 8 8"><path d="M0.5 0.5 L7.5 7.5 M7.5 0.5 L0.5 7.5" stroke="#6e7173" stroke-width="1.1"/></svg>
<div style="position:absolute;left:1534px;top:4px;width:3px;height:3px;background:#c8c8c8;border-radius:1px"></div>
<div style="position:absolute;left:1534px;top:8px;width:3px;height:3px;background:#c8c8c8;border-radius:1px"></div>
<div style="position:absolute;left:1534px;top:12px;width:3px;height:3px;background:#c8c8c8;border-radius:1px"></div>
<div style="position:absolute;left:388px;top:379px;width:1157px;height:20px;background:#323232;"></div>
<div style="position:absolute;left:331px;top:379px;width:52px;height:20px;background:#303131;"></div>
<div style="position:absolute;left:1273px;top:20px;width:1px;height:489px;background:#3a3a3a;"></div>
<div style="position:absolute;left:449px;top:96px;width:1px;height:61px;background:#3b3b3b;"></div>
<div style="position:absolute;left:449px;top:238px;width:1px;height:61px;background:#3b3b3b;"></div>
<div style="position:absolute;left:449px;top:379px;width:1px;height:61px;background:#3b3b3b;"></div>
<div style="position:absolute;left:385px;top:20px;width:1px;height:489px;background:#555759;"></div>
<div style="position:absolute;left:331px;top:20px;width:1215px;height:489px;overflow:hidden">
<div class="t" style="left:-1.5px;width:20px;text-align:right;top:-3.5px;line-height:20px;font-family:'Liberation Mono', monospace;font-size:13.5px;color:#5d6164;-webkit-text-stroke:0;transform:scaleX(0.8);transform-origin:100% 0">33</div>
<div class="t" style="left:89.7px;top:-3.6px;line-height:20px;font-family:'Liberation Mono', monospace;font-size:12.2px;-webkit-text-stroke:0.25px currentColor;">    <span style="color:#e8bf6a">&lt;/dependency&gt;</span></div>
<div class="t" style="left:-1.5px;width:20px;text-align:right;top:16.7px;line-height:20px;font-family:'Liberation Mono', monospace;font-size:13.5px;color:#5d6164;-webkit-text-stroke:0;transform:scaleX(0.8);transform-origin:100% 0">34</div>
<div class="t" style="left:-1.5px;width:20px;text-align:right;top:36.9px;line-height:20px;font-family:'Liberation Mono', monospace;font-size:13.5px;color:#5d6164;-webkit-text-stroke:0;transform:scaleX(0.8);transform-origin:100% 0">35</div>
<div class="t" style="left:89.7px;top:36.8px;line-height:20px;font-family:'Liberation Mono', monospace;font-size:12.2px;-webkit-text-stroke:0.25px currentColor;">    <span style="color:#808080"> !   </span><span style="color:#8c8c8c;text-decoration:underline;text-decoration-color:#515b68;text-underline-offset:2px;text-decoration-thickness:1.3px">https://<span class="mb">m</span>vnrepository.co<span class="mb">m</span>/artifact/org.openjfx/javafx-fx<span class="mb">m</span>l</span></div>
<div class="t" style="left:-1.5px;width:20px;text-align:right;top:57.1px;line-height:20px;font-family:'Liberation Mono', monospace;font-size:13.5px;color:#5d6164;-webkit-text-stroke:0;transform:scaleX(0.8);transform-origin:100% 0">36</div>
<div class="t" style="left:89.7px;top:57.0px;line-height:20px;font-family:'Liberation Mono', monospace;font-size:12.2px;-webkit-text-stroke:0.25px currentColor;">    <span style="color:#e8bf6a">&lt;dependency&gt;</span></div>
<div class="t" style="left:-1.5px;width:20px;text-align:right;top:77.3px;line-height:20px;font-family:'Liberation Mono', monospace;font-size:13.5px;color:#5d6164;-webkit-text-stroke:0;transform:scaleX(0.8);transform-origin:100% 0">37</div>
<div class="t" style="left:89.7px;top:77.2px;line-height:20px;font-family:'Liberation Mono', monospace;font-size:12.2px;-webkit-text-stroke:0.25px currentColor;">        <span style="color:#e8bf6a">&lt;groupId&gt;</span><span style="color:#a9b7c6">org.openjfx</span><span style="color:#e8bf6a">&lt;/groupId&gt;</span></div>
<div class="t" style="left:-1.5px;width:20px;text-align:right;top:97.5px;line-height:20px;font-family:'Liberation Mono', monospace;font-size:13.5px;color:#5d6164;-webkit-text-stroke:0;transform:scaleX(0.8);transform-origin:100% 0">38</div>
<div class="t" style="left:89.7px;top:97.4px;line-height:20px;font-family:'Liberation Mono', monospace;font-size:12.2px;-webkit-text-stroke:0.25px currentColor;">        <span style="color:#e8bf6a">&lt;artifactId&gt;</span><span style="color:#a9b7c6">javafx-fx<span class="mb">m</span>l</span><span style="color:#e8bf6a">&lt;/artifactId&gt;</span></div>
<div class="t" style="left:-1.5px;width:20px;text-align:right;top:117.7px;line-height:20px;font-family:'Liberation Mono', monospace;font-size:13.5px;color:#5d6164;-webkit-text-stroke:0;transform:scaleX(0.8);transform-origin:100% 0">39</div>
<div class="t" style="left:89.7px;top:117.6px;line-height:20px;font-family:'Liberation Mono', monospace;font-size:12.2px;-webkit-text-stroke:0.25px currentColor;">        <span style="color:#e8bf6a">&lt;version&gt;</span><span style="color:#a9b7c6">19</span><span style="color:#e8bf6a">&lt;/version&gt;</span></div>
<div class="t" style="left:-1.5px;width:20px;text-align:right;top:137.9px;line-height:20px;font-family:'Liberation Mono', monospace;font-size:13.5px;color:#5d6164;-webkit-text-stroke:0;transform:scaleX(0.8);transform-origin:100% 0">40</div>
<div class="t" style="left:89.7px;top:137.8px;line-height:20px;font-family:'Liberation Mono', monospace;font-size:12.2px;-webkit-text-stroke:0.25px currentColor;">    <span style="color:#e8bf6a">&lt;/dependency&gt;</span></div>
<div class="t" style="left:-1.5px;width:20px;text-align:right;top:158.1px;line-height:20px;font-family:'Liberation Mono', monospace;font-size:13.5px;color:#5d6164;-webkit-text-stroke:0;transform:scaleX(0.8);transform-origin:100% 0">41</div>
<div class="t" style="left:-1.5px;width:20px;text-align:right;top:178.3px;line-height:20px;font-family:'Liberation Mono', monospace;font-size:13.5px;color:#5d6164;-webkit-text-stroke:0;transform:scaleX(0.8);transform-origin:100% 0">42</div>
<div class="t" style="left:89.7px;top:178.2px;line-height:20px;font-family:'Liberation Mono', monospace;font-size:12.2px;-webkit-text-stroke:0.25px currentColor;">    <span style="color:#808080"> !   </span><span style="color:#8c8c8c;text-decoration:underline;text-decoration-color:#515b68;text-underline-offset:2px;text-decoration-thickness:1.3px">https://<span class="mb">m</span>vnrepository.co<span class="mb">m</span>/artifact/org.apache.poi/poi</span></div>
<div class="t" style="left:-1.5px;width:20px;text-align:right;top:198.5px;line-height:20px;font-family:'Liberation Mono', monospace;font-size:13.5px;color:#5d6164;-webkit-text-stroke:0;transform:scaleX(0.8);transform-origin:100% 0">43</div>
<div class="t" style="left:89.7px;top:198.4px;line-height:20px;font-family:'Liberation Mono', monospace;font-size:12.2px;-webkit-text-stroke:0.25px currentColor;">    <span style="color:#e8bf6a">&lt;dependency&gt;</span></div>
<div class="t" style="left:-1.5px;width:20px;text-align:right;top:218.7px;line-height:20px;font-family:'Liberation Mono', monospace;font-size:13.5px;color:#5d6164;-webkit-text-stroke:0;transform:scaleX(0.8);transform-origin:100% 0">44</div>
<div class="t" style="left:89.7px;top:218.6px;line-height:20px;font-family:'Liberation Mono', monospace;font-size:12.2px;-webkit-text-stroke:0.25px currentColor;">        <span style="color:#e8bf6a">&lt;groupId&gt;</span><span style="color:#a9b7c6">org.apache.poi</span><span style="color:#e8bf6a">&lt;/groupId&gt;</span></div>
<div class="t" style="left:-1.5px;width:20px;text-align:right;top:238.9px;line-height:20px;font-family:'Liberation Mono', monospace;font-size:13.5px;color:#5d6164;-webkit-text-stroke:0;transform:scaleX(0.8);transform-origin:100% 0">45</div>
<div class="t" style="left:89.7px;top:238.8px;line-height:20px;font-family:'Liberation Mono', monospace;font-size:12.2px;-webkit-text-stroke:0.25px currentColor;">        <span style="color:#e8bf6a">&lt;artifactId&gt;</span><span style="color:#a9b7c6">poi</span><span style="color:#e8bf6a">&lt;/artifactId&gt;</span></div>
<div class="t" style="left:-1.5px;width:20px;text-align:right;top:259.1px;line-height:20px;font-family:'Liberation Mono', monospace;font-size:13.5px;color:#5d6164;-webkit-text-stroke:0;transform:scaleX(0.8);transform-origin:100% 0">46</div>
<div class="t" style="left:89.7px;top:259.0px;line-height:20px;font-family:'Liberation Mono', monospace;font-size:12.2px;-webkit-text-stroke:0.25px currentColor;">        <span style="color:#e8bf6a">&lt;version&gt;</span><span style="color:#a9b7c6">5.2.3</span><span style="color:#e8bf6a">&lt;/version&gt;</span></div>
<div class="t" style="left:-1.5px;width:20px;text-align:right;top:279.3px;line-height:20px;font-family:'Liberation Mono', monospace;font-size:13.5px;color:#5d6164;-webkit-text-stroke:0;transform:scaleX(0.8);transform-origin:100% 0">47</div>
<div class="t" style="left:89.7px;top:279.2px;line-height:20px;font-family:'Liberation Mono', monospace;font-size:12.2px;-webkit-text-stroke:0.25px currentColor;">    <span style="color:#e8bf6a">&lt;/dependency&gt;</span></div>
<div class="t" style="left:-1.5px;width:20px;text-align:right;top:299.5px;line-height:20px;font-family:'Liberation Mono', monospace;font-size:13.5px;color:#5d6164;-webkit-text-stroke:0;transform:scaleX(0.8);transform-origin:100% 0">48</div>
<div class="t" style="left:-1.5px;width:20px;text-align:right;top:319.7px;line-height:20px;font-family:'Liberation Mono', monospace;font-size:13.5px;color:#5d6164;-webkit-text-stroke:0;transform:scaleX(0.8);transform-origin:100% 0">49</div>
<div class="t" style="left:89.7px;top:319.6px;line-height:20px;font-family:'Liberation Mono', monospace;font-size:12.2px;-webkit-text-stroke:0.25px currentColor;">    <span style="color:#808080"> !   </span><span style="color:#8c8c8c;text-decoration:underline;text-decoration-color:#515b68;text-underline-offset:2px;text-decoration-thickness:1.3px">https://<span class="mb">m</span>vnrepository.co<span class="mb">m</span>/artifact/org.apache.poi/poi-oox<span class="mb">m</span>l</span></div>
<div class="t" style="left:-1.5px;width:20px;text-align:right;top:339.9px;line-height:20px;font-family:'Liberation Mono', monospace;font-size:13.5px;color:#5d6164;-webkit-text-stroke:0;transform:scaleX(0.8);transform-origin:100% 0">50</div>
<div class="t" style="left:89.7px;top:339.8px;line-height:20px;font-family:'Liberation Mono', monospace;font-size:12.2px;-webkit-text-stroke:0.25px currentColor;">    <span style="color:#e8bf6a">&lt;dependency&gt;</span></div>
<div class="t" style="left:-1.5px;width:20px;text-align:right;top:360.1px;line-height:20px;font-family:'Liberation Mono', monospace;font-size:13.5px;color:#c8c8c8;-webkit-text-stroke:0.3px currentColor;transform:scaleX(0.8);transform-origin:100% 0">51</div>
<div class="t" style="left:89.7px;top:360.0px;line-height:20px;font-family:'Liberation Mono', monospace;font-size:12.2px;-webkit-text-stroke:0.25px currentColor;">        <span style="color:#e8bf6a">&lt;groupId&gt;</span><span style="color:#a9b7c6">org.apache.poi</span><span style="color:#e8bf6a">&lt;/groupId&gt;</span></div>
<div class="t" style="left:-1.5px;width:20px;text-align:right;top:380.3px;line-height:20px;font-family:'Liberation Mono', monospace;font-size:13.5px;color:#5d6164;-webkit-text-stroke:0;transform:scaleX(0.8);transform-origin:100% 0">52</div>
<div class="t" style="left:89.7px;top:380.2px;line-height:20px;font-family:'Liberation Mono', monospace;font-size:12.2px;-webkit-text-stroke:0.25px currentColor;">        <span style="color:#e8bf6a">&lt;artifactId&gt;</span><span style="color:#a9b7c6">poi-oox<span class="mb">m</span>l</span><span style="color:#e8bf6a">&lt;/artifactId&gt;</span></div>
<div class="t" style="left:-1.5px;width:20px;text-align:right;top:400.5px;line-height:20px;font-family:'Liberation Mono', monospace;font-size:13.5px;color:#5d6164;-webkit-text-stroke:0;transform:scaleX(0.8);transform-origin:100% 0">53</div>
<div class="t" style="left:89.7px;top:400.4px;line-height:20px;font-family:'Liberation Mono', monospace;font-size:12.2px;-webkit-text-stroke:0.25px currentColor;">        <span style="color:#e8bf6a">&lt;version&gt;</span><span style="color:#a9b7c6">5.2.3</span><span style="color:#e8bf6a">&lt;/version&gt;</span></div>
<div class="t" style="left:-1.5px;width:20px;text-align:right;top:420.7px;line-height:20px;font-family:'Liberation Mono', monospace;font-size:13.5px;color:#5d6164;-webkit-text-stroke:0;transform:scaleX(0.8);transform-origin:100% 0">54</div>
<div class="t" style="left:89.7px;top:420.6px;line-height:20px;font-family:'Liberation Mono', monospace;font-size:12.2px;-webkit-text-stroke:0.25px currentColor;">    <span style="color:#e8bf6a">&lt;/dependency&gt;</span></div>
<div class="t" style="left:-1.5px;width:20px;text-align:right;top:440.9px;line-height:20px;font-family:'Liberation Mono', monospace;font-size:13.5px;color:#5d6164;-webkit-text-stroke:0;transform:scaleX(0.8);transform-origin:100% 0">55</div>
<div class="t" style="left:-1.5px;width:20px;text-align:right;top:461.1px;line-height:20px;font-family:'Liberation Mono', monospace;font-size:13.5px;color:#5d6164;-webkit-text-stroke:0;transform:scaleX(0.8);transform-origin:100% 0">56</div>
<div class="t" style="left:89.7px;top:461.0px;line-height:20px;font-family:'Liberation Mono', monospace;font-size:12.2px;-webkit-text-stroke:0.25px currentColor;">    <span style="color:#808080"> !   </span><span style="color:#8c8c8c;text-decoration:underline;text-decoration-color:#515b68;text-underline-offset:2px;text-decoration-thickness:1.3px">https://<span class="mb">m</span>vnrepository.co<span class="mb">m</span>/artifact/org.apache.logging.log4j/log4j-core</span></div>
<div class="t" style="left:-1.5px;width:20px;text-align:right;top:481.3px;line-height:20px;font-family:'Liberation Mono', monospace;font-size:13.5px;color:#5d6164;-webkit-text-stroke:0;transform:scaleX(0.8);transform-origin:100% 0">57</div>
<div class="t" style="left:89.7px;top:481.2px;line-height:20px;font-family:'Liberation Mono', monospace;font-size:12.2px;-webkit-text-stroke:0.25px currentColor;">    <span style="color:#e8bf6a">&lt;dependency&gt;</span></div>
</div>
<svg style="position:absolute;left:450px;top:62px" width="30" height="8" viewBox="0 0 30 8"><path d="M7 4 H1.2 M4 1 L1 4 L4 7" stroke="#8a8a8a" stroke-width="1.3" fill="none"/><path d="M14.2 4 H28.5" stroke="#8a8a8a" stroke-width="1.3"/></svg>
<svg style="position:absolute;left:918px;top:62px" width="24" height="8" viewBox="0 0 24 8"><path d="M2.5 4 H21.5 M18.5 1 L21.5 4 L18.5 7" stroke="#8a8a8a" stroke-width="1.3" fill="none"/></svg>
<svg style="position:absolute;left:450px;top:204px" width="30" height="8" viewBox="0 0 30 8"><path d="M7 4 H1.2 M4 1 L1 4 L4 7" stroke="#8a8a8a" stroke-width="1.3" fill="none"/><path d="M14.2 4 H28.5" stroke="#8a8a8a" stroke-width="1.3"/></svg>
<svg style="position:absolute;left:882px;top:204px" width="24" height="8" viewBox="0 0 24 8"><path d="M2.5 4 H21.5 M18.5 1 L21.5 4 L18.5 7" stroke="#8a8a8a" stroke-width="1.3" fill="none"/></svg>
<svg style="position:absolute;left:450px;top:345px" width="30" height="8" viewBox="0 0 30 8"><path d="M7 4 H1.2 M4 1 L1 4 L4 7" stroke="#8a8a8a" stroke-width="1.3" fill="none"/><path d="M14.2 4 H28.5" stroke="#8a8a8a" stroke-width="1.3"/></svg>
<svg style="position:absolute;left:926px;top:345px" width="24" height="8" viewBox="0 0 24 8"><path d="M2.5 4 H21.5 M18.5 1 L21.5 4 L18.5 7" stroke="#8a8a8a" stroke-width="1.3" fill="none"/></svg>
<svg style="position:absolute;left:450px;top:486px" width="30" height="8" viewBox="0 0 30 8"><path d="M7 4 H1.2 M4 1 L1 4 L4 7" stroke="#8a8a8a" stroke-width="1.3" fill="none"/><path d="M14.2 4 H28.5" stroke="#8a8a8a" stroke-width="1.3"/></svg>
<svg style="position:absolute;left:1006px;top:486px" width="24" height="8" viewBox="0 0 24 8"><path d="M2.5 4 H21.5 M18.5 1 L21.5 4 L18.5 7" stroke="#8a8a8a" stroke-width="1.3" fill="none"/></svg>
<div style="position:absolute;left:331px;top:20px;width:1215px;height:489px;overflow:hidden"><svg style="position:absolute;left:50px;top:-1px" width="10" height="11" viewBox="0 0 10 11"><path d="M0.5 4 L5 0.5 L9.5 4 V10.5 H0.5 Z" fill="#313335" stroke="#6d6f71" stroke-width="1"/><path d="M2.5 6 H7.5" stroke="#6d6f71" stroke-width="1"/></svg></div>
<div style="position:absolute;left:331px;top:20px;width:1215px;height:489px;overflow:hidden"><svg style="position:absolute;left:50px;top:141px" width="10" height="11" viewBox="0 0 10 11"><path d="M0.5 4 L5 0.5 L9.5 4 V10.5 H0.5 Z" fill="#313335" stroke="#6d6f71" stroke-width="1"/><path d="M2.5 6 H7.5" stroke="#6d6f71" stroke-width="1"/></svg></div>
<div style="position:absolute;left:331px;top:20px;width:1215px;height:489px;overflow:hidden"><svg style="position:absolute;left:50px;top:282px" width="10" height="11" viewBox="0 0 10 11"><path d="M0.5 4 L5 0.5 L9.5 4 V10.5 H0.5 Z" fill="#313335" stroke="#6d6f71" stroke-width="1"/><path d="M2.5 6 H7.5" stroke="#6d6f71" stroke-width="1"/></svg></div>
<div style="position:absolute;left:331px;top:20px;width:1215px;height:489px;overflow:hidden"><svg style="position:absolute;left:50px;top:424px" width="10" height="11" viewBox="0 0 10 11"><path d="M0.5 4 L5 0.5 L9.5 4 V10.5 H0.5 Z" fill="#313335" stroke="#6d6f71" stroke-width="1"/><path d="M2.5 6 H7.5" stroke="#6d6f71" stroke-width="1"/></svg></div>
<div style="position:absolute;left:331px;top:20px;width:1215px;height:489px;overflow:hidden"><svg style="position:absolute;left:50px;top:62px" width="10" height="11" viewBox="0 0 10 11"><path d="M0.5 0.5 H9.5 V7 L5 10.5 L0.5 7 Z" fill="#313335" stroke="#6d6f71" stroke-width="1"/><path d="M2.5 4.5 H7.5" stroke="#6d6f71" stroke-width="1"/></svg></div>
<div style="position:absolute;left:331px;top:20px;width:1215px;height:489px;overflow:hidden"><svg style="position:absolute;left:50px;top:203px" width="10" height="11" viewBox="0 0 10 11"><path d="M0.5 0.5 H9.5 V7 L5 10.5 L0.5 7 Z" fill="#313335" stroke="#6d6f71" stroke-width="1"/><path d="M2.5 4.5 H7.5" stroke="#6d6f71" stroke-width="1"/></svg></div>
<div style="position:absolute;left:331px;top:20px;width:1215px;height:489px;overflow:hidden"><svg style="position:absolute;left:50px;top:344px" width="10" height="11" viewBox="0 0 10 11"><path d="M0.5 0.5 H9.5 V7 L5 10.5 L0.5 7 Z" fill="#313335" stroke="#6d6f71" stroke-width="1"/><path d="M2.5 4.5 H7.5" stroke="#6d6f71" stroke-width="1"/></svg></div>
<div style="position:absolute;left:612px;top:381px;width:1px;height:16px;background:#cfcfcf;"></div>
<svg style="position:absolute;left:1528px;top:27px" width="12" height="10" viewBox="0 0 12 10"><path d="M1 5 L4.5 8.5 L11 1.5" stroke="#5fb55a" stroke-width="2" fill="none"/></svg>
<div style="position:absolute;left:1537px;top:240px;width:8px;height:143px;background:rgba(110,110,110,0.5);"></div>
<div class="t" style="left:341px;top:512px;color:#bbbbbb;font-size:12px;font-family:'Liberation Sans', sans-serif;font-weight:normal;">project</div>
<div class="t" style="left:400px;top:512px;color:#bbbbbb;font-size:12px;font-family:'Liberation Sans', sans-serif;font-weight:normal;">dependencies</div>
<div class="t" style="left:496px;top:512px;color:#bbbbbb;font-size:12px;font-family:'Liberation Sans', sans-serif;font-weight:normal;">dependency</div>
<div class="t" style="left:584px;top:512px;color:#bbbbbb;font-size:12px;font-family:'Liberation Sans', sans-serif;font-weight:normal;">groupId</div>
<svg style="position:absolute;left:388px;top:516px" width="5" height="8" viewBox="0 0 5 8"><path d="M0.5 0.5 L4 4 L0.5 7.5" stroke="#6e7173" stroke-width="1" fill="none"/></svg>
<svg style="position:absolute;left:483px;top:516px" width="5" height="8" viewBox="0 0 5 8"><path d="M0.5 0.5 L4 4 L0.5 7.5" stroke="#6e7173" stroke-width="1" fill="none"/></svg>
<svg style="position:absolute;left:572px;top:516px" width="5" height="8" viewBox="0 0 5 8"><path d="M0.5 0.5 L4 4 L0.5 7.5" stroke="#6e7173" stroke-width="1" fill="none"/></svg>
<div class="t" style="left:23px;top:536px;color:#bbbbbb;font-size:11.5px;font-family:'Liberation Sans', sans-serif;font-weight:normal;transform:scaleX(0.9541);transform-origin:0 0;">运行:</div>
<svg style="position:absolute;left:67px;top:537px" width="13" height="12" viewBox="0 0 13 12"><rect x="2.5" y="0.5" width="10" height="8" fill="none" stroke="#7d8a94" stroke-width="1"/><rect x="0.5" y="3" width="10" height="8.5" fill="#3c3f41" stroke="#7d8a94" stroke-width="1"/><rect x="2" y="5.5" width="7" height="4.5" fill="#3592c4"/></svg>
<div class="t" style="left:84px;top:536px;color:#bbbbbb;font-size:12px;font-family:'Liberation Sans', sans-serif;font-weight:normal;">client</div>
<svg style="position:absolute;left:118px;top:541px" width="7" height="7" viewBox="0 0 7 7"><path d="M0.5 0.5 L6.5 6.5 M6.5 0.5 L0.5 6.5" stroke="#6e7173" stroke-width="1"/></svg>
<div style="position:absolute;left:55px;top:554px;width:82px;height:2px;background:#7a8a96;"></div>
<svg style="position:absolute;left:1504px;top:537.5px" width="13" height="13" viewBox="0 0 13 13"><path d="M4.95 0.29 L8.05 0.29 L8.26 2.14 L9.39 2.80 L11.10 2.05 L12.65 4.74 L11.15 5.85 L11.15 7.15 L12.65 8.26 L11.10 10.95 L9.39 10.20 L8.26 10.86 L8.05 12.71 L4.95 12.71 L4.74 10.86 L3.61 10.20 L1.90 10.95 L0.35 8.26 L1.85 7.15 L1.85 5.85 L0.35 4.74 L1.90 2.05 L3.61 2.80 L4.74 2.14 Z" fill="#afb1b3"/><circle cx="6.5" cy="6.5" r="2.1" fill="#3d3f41"/></svg>
<div style="position:absolute;left:1528px;top:543.5px;width:12px;height:1.7px;background:#afb1b3;"></div>
<svg style="position:absolute;left:25px;top:563px" width="12" height="13" viewBox="0 0 12 13"><path d="M1 0.5 L11 6.5 L1 12.5 Z" fill="#59a869"/></svg>
<svg style="position:absolute;left:24px;top:586px" width="13" height="13" viewBox="0 0 13 13"><path d="M2 11 L7 6" stroke="#c9c9c9" stroke-width="2.4" stroke-linecap="round"/><circle cx="9" cy="4" r="3.2" fill="#c9c9c9"/><circle cx="10.5" cy="2.5" r="1.4" fill="#3c3f41"/></svg>
<div style="position:absolute;left:23px;top:608px;width:17px;height:1px;background:#505355;"></div>
<div style="position:absolute;left:25px;top:618px;width:11px;height:11px;background:#5c5f61;"></div>
<svg style="position:absolute;left:23px;top:641px" width="15" height="12" viewBox="0 0 15 12"><rect x="0.5" y="2.5" width="14" height="9" rx="1" fill="#5c5f61"/><rect x="5" y="0.5" width="5" height="3" fill="#5c5f61"/><circle cx="7.5" cy="7" r="2.5" fill="#3c3f41"/></svg>
<svg style="position:absolute;left:23px;top:665px" width="15" height="14" viewBox="0 0 15 14"><ellipse cx="7" cy="8" rx="4" ry="5" fill="#5c5f61"/><path d="M1 5 L3 6 M1 9 H3 M1 12 L3 11 M13 5 L11 6 M13 9 H11" stroke="#5c5f61" stroke-width="1.2"/><path d="M9 9 L14 14" stroke="#5c5f61" stroke-width="1.5"/></svg>
<svg style="position:absolute;left:24px;top:688px" width="14" height="14" viewBox="0 0 14 14"><path d="M4 3 V0.5 H13.5 V13.5 H4 V11" stroke="#5c5f61" stroke-width="1.2" fill="none"/><path d="M0 7 H9 M6 4 L9 7 L6 10" stroke="#5c5f61" stroke-width="1.2" fill="none"/></svg>
<div style="position:absolute;left:23px;top:710px;width:17px;height:1px;background:#505355;"></div>
<svg style="position:absolute;left:24px;top:720px" width="14" height="12" viewBox="0 0 14 12"><rect x="0" y="0" width="6" height="5" fill="#c9c9c9"/><rect x="7.5" y="0" width="6" height="5" fill="#c9c9c9"/><rect x="0" y="7" width="13.5" height="4" fill="#c9c9c9"/></svg>
<svg style="position:absolute;left:24px;top:749px" width="14" height="14" viewBox="0 0 14 14"><path d="M1.5 12.5 L6 8" stroke="#c9c9c9" stroke-width="1.6"/><path d="M8 1 L13 6 L10.5 7 L8 10 L4 6 L7 3.5 Z" fill="#c9c9c9"/></svg>
<svg style="position:absolute;left:52px;top:563px" width="12" height="14" viewBox="0 0 12 14"><path d="M6 13 V1.5 M1.5 6 L6 1.5 L10.5 6" stroke="#5c5f61" stroke-width="1.4" fill="none"/></svg>
<svg style="position:absolute;left:52px;top:587px" width="12" height="14" viewBox="0 0 12 14"><path d="M6 1 V12.5 M1.5 8 L6 12.5 L10.5 8" stroke="#5c5f61" stroke-width="1.4" fill="none"/></svg>
<svg style="position:absolute;left:51px;top:612px" width="14" height="13" viewBox="0 0 14 13"><path d="M0.5 1 H13 M0.5 5 H10 A2.8 2.8 0 0 1 10 10.6 H6 M0.5 9 H3" stroke="#c9c9c9" stroke-width="1.5" fill="none"/><path d="M7.5 8.3 L5.3 10.6 L7.5 12.8" stroke="#c9c9c9" stroke-width="1.4" fill="none"/></svg>
<div style="position:absolute;left:47px;top:631px;width:22px;height:22px;background:#4c5052;border-radius:3px"></div>
<svg style="position:absolute;left:51px;top:635px" width="14" height="14" viewBox="0 0 14 14"><path d="M0.5 2 H6 M0.5 6 H6 M0.5 12.5 H13.5" stroke="#c9c9c9" stroke-width="1.5"/><path d="M10 1 V9 M7 6.5 L10 9.5 L13 6.5" stroke="#c9c9c9" stroke-width="1.5" fill="none"/></svg>
<svg style="position:absolute;left:51px;top:660px" width="14" height="13" viewBox="0 0 14 13"><rect x="3" y="0.5" width="8" height="3.5" fill="#c9c9c9"/><rect x="0.5" y="4.5" width="13" height="5.5" rx="1" fill="#c9c9c9"/><rect x="3" y="8.5" width="8" height="4" fill="#c9c9c9" stroke="#3c3f41" stroke-width="1"/></svg>
<svg style="position:absolute;left:52px;top:684px" width="12" height="14" viewBox="0 0 12 14"><rect x="0" y="1.5" width="12" height="2" fill="#c9c9c9"/><rect x="4" y="0" width="4" height="2" fill="#c9c9c9"/><path d="M1.5 4.5 H10.5 L10 13.5 H2 Z" fill="#c9c9c9"/></svg>
<div style="position:absolute;left:81px;top:558px;width:345px;height:19px;background:#3b3b3b;"></div>
<div class="t" style="left:81px;top:559px;color:#a6a6a6;font-size:12.2px;font-family:'Liberation Mono', monospace;font-weight:normal;">"C:\Program Files\Java\jdk-16\bin\java.exe" ...</div>
<div class="t" style="left:81px;top:599px;color:#b0b0b0;font-size:12.2px;font-family:'Liberation Serif', serif;font-weight:normal;transform:scaleX(0.9814);transform-origin:0 0;">进程已结束,退出代码</div>
<div class="t" style="left:191px;top:599px;color:#b0b0b0;font-size:12.2px;font-family:'Liberation Mono', monospace;font-weight:normal;">-1</div>
<div style="position:absolute;left:63px;top:840px;width:52px;height:20px;background:#2f3133;"></div>
<svg style="position:absolute;left:27px;top:845px" width="10" height="12" viewBox="0 0 10 12"><circle cx="2" cy="2" r="1.5" fill="#afb1b3"/><circle cx="2" cy="10" r="1.5" fill="#afb1b3"/><circle cx="8" cy="3" r="1.5" fill="#afb1b3"/><path d="M2 2 V10 M8 3 C8 7 2 6 2 10" stroke="#afb1b3" stroke-width="1.3" fill="none"/></svg>
<div class="t" style="left:41.3px;top:843px;color:#afb1b3;font-size:12.5px;font-family:'Liberation Sans', sans-serif;font-weight:normal;transform:scaleX(0.8943);transform-origin:0 0;">Git</div>
<svg style="position:absolute;left:73px;top:846px" width="9" height="10" viewBox="0 0 9 10"><path d="M0 0 L9 5 L0 10 Z" fill="#afb1b3"/></svg>
<div class="t" style="left:87.3px;top:843px;color:#afb1b3;font-size:12.5px;font-family:'Liberation Sans', sans-serif;font-weight:normal;transform:scaleX(0.8080);transform-origin:0 0;">运行</div>
<svg style="position:absolute;left:124px;top:845px" width="10" height="12" viewBox="0 0 10 12"><ellipse cx="5" cy="7" rx="4" ry="5" fill="#afb1b3"/><path d="M2 1 L3 3 M8 1 L7 3" stroke="#afb1b3"/></svg>
<div class="t" style="left:139.2px;top:843px;color:#afb1b3;font-size:12.5px;font-family:'Liberation Sans', sans-serif;font-weight:normal;transform:scaleX(0.8040);transform-origin:0 0;">调试</div>
<svg style="position:absolute;left:177px;top:846px" width="10" height="10" viewBox="0 0 10 10"><path d="M0 1 H2 M3.5 1 H10 M0 5 H2 M3.5 5 H10 M0 9 H2 M3.5 9 H10" stroke="#afb1b3" stroke-width="1.5"/></svg>
<div class="t" style="left:191px;top:843px;color:#afb1b3;font-size:12.5px;font-family:'Liberation Sans', sans-serif;font-weight:normal;transform:scaleX(0.8254);transform-origin:0 0;">TODO</div>
<svg style="position:absolute;left:237px;top:845px" width="11" height="11" viewBox="0 0 11 11"><circle cx="5.5" cy="5.5" r="5" fill="#afb1b3"/><path d="M5.5 2.5 V6.5 M5.5 7.8 V9" stroke="#3c3f41" stroke-width="1.6"/></svg>
<div class="t" style="left:251.4px;top:843px;color:#afb1b3;font-size:12.5px;font-family:'Liberation Sans', sans-serif;font-weight:normal;transform:scaleX(0.8080);transform-origin:0 0;">问题</div>
<svg style="position:absolute;left:288px;top:845px" width="11" height="11" viewBox="0 0 11 11"><rect x="0" y="0" width="11" height="11" fill="#afb1b3"/><path d="M2 3 L4.5 5 L2 7 M5 8 H9" stroke="#3c3f41" stroke-width="1.3" fill="none"/></svg>
<div class="t" style="left:302.9px;top:843px;color:#afb1b3;font-size:12.5px;font-family:'Liberation Sans', sans-serif;font-weight:normal;transform:scaleX(0.8040);transform-origin:0 0;">终端</div>
<svg style="position:absolute;left:338px;top:845px" width="12" height="12" viewBox="0 0 12 12"><circle cx="6" cy="6" r="5.5" fill="#afb1b3"/><path d="M4.5 3.5 L8.5 6 L4.5 8.5 Z" fill="#3c3f41"/></svg>
<div class="t" style="left:354.3px;top:843px;color:#afb1b3;font-size:12.5px;font-family:'Liberation Sans', sans-serif;font-weight:normal;transform:scaleX(0.7880);transform-origin:0 0;">服务</div>
<svg style="position:absolute;left:390.6px;top:845px" width="12" height="12" viewBox="0 0 12 12"><path d="M6 0.5 L11.5 3 L6 5.5 L0.5 3 Z" fill="#afb1b3"/><path d="M0.5 6 L6 8.5 L11.5 6 M0.5 9 L6 11.5 L11.5 9" stroke="#afb1b3" stroke-width="1.3" fill="none"/></svg>
<div class="t" style="left:406.2px;top:843px;color:#afb1b3;font-size:12.5px;font-family:'Liberation Sans', sans-serif;font-weight:normal;transform:scaleX(0.7880);transform-origin:0 0;">依赖</div>
<svg style="position:absolute;left:443px;top:845px" width="12" height="12" viewBox="0 0 12 12"><circle cx="6" cy="6" r="5" fill="none" stroke="#6e7173" stroke-width="1.2"/><path d="M6 2.5 V6 H9" stroke="#6e7173" stroke-width="1.2" fill="none"/></svg>
<div class="t" style="left:458.7px;top:843px;color:#afb1b3;font-size:12.5px;font-family:'Liberation Sans', sans-serif;font-weight:normal;transform:scaleX(0.8254);transform-origin:0 0;">Statistic</div>
<svg style="position:absolute;left:511px;top:845px" width="12" height="12" viewBox="0 0 12 12"><path d="M1 3 L5 0.5 L8 3 L6 5 Z" fill="#afb1b3"/><path d="M5.5 4.5 L11 10.5" stroke="#afb1b3" stroke-width="2"/></svg>
<div class="t" style="left:527px;top:843px;color:#afb1b3;font-size:12.5px;font-family:'Liberation Sans', sans-serif;font-weight:normal;transform:scaleX(0.7880);transform-origin:0 0;">构建</div>
<svg style="position:absolute;left:5px;top:863px" width="9" height="9" viewBox="0 0 9 9"><rect x="0.5" y="0.5" width="8" height="8" fill="none" stroke="#afb1b3" stroke-width="1"/></svg>
<div class="t" style="left:23px;top:861px;color:#afb1b3;font-size:12.5px;font-family:'Liberation Sans', sans-serif;font-weight:normal;transform:scaleX(0.8557);transform-origin:0 0;">所有文件都处于最新状态 (1 分钟 之前)</div>
<div class="t" style="left:1331.7px;top:861px;color:#afb1b3;font-size:12.5px;font-family:'Liberation Sans', sans-serif;font-weight:normal;transform:scaleX(0.9015);transform-origin:0 0;">51:31</div>
<div class="t" style="left:1372.3px;top:861px;color:#afb1b3;font-size:12.5px;font-family:'Liberation Sans', sans-serif;font-weight:normal;transform:scaleX(0.8018);transform-origin:0 0;">LF</div>
<div class="t" style="left:1394.9px;top:861px;color:#6e7173;font-size:12.5px;font-family:'Liberation Sans', sans-serif;font-weight:normal;transform:scaleX(0.9035);transform-origin:0 0;">UTF-8</div>
<div class="t" style="left:1437.8px;top:861px;color:#afb1b3;font-size:12.5px;font-family:'Liberation Sans', sans-serif;font-weight:normal;transform:scaleX(0.8857);transform-origin:0 0;">4 个空格</div>
<div class="t" style="left:1508px;top:861px;color:#afb1b3;font-size:12.5px;font-family:'Liberation Sans', sans-serif;font-weight:normal;transform:scaleX(0.9581);transform-origin:0 0;">main</div>
<svg style="position:absolute;left:1494px;top:862px" width="10" height="12" viewBox="0 0 10 12"><path d="M2 1 V11 M2 7 C2 4 8 5 8 1" stroke="#afb1b3" stroke-width="1.3" fill="none"/><circle cx="8" cy="10" r="2.5" fill="#59a869"/></svg>
<svg style="position:absolute;left:1543px;top:863px" width="10" height="11" viewBox="0 0 10 11"><rect x="0" y="5" width="8" height="6" fill="#afb1b3"/><path d="M2 5 V3 A2.5 2.5 0 0 1 7 3" stroke="#afb1b3" stroke-width="1.3" fill="none"/></svg>
<div style="position:absolute;left:2px;top:5px;color:#dedede;font-size:10px;font-family:'Liberation Sans', sans-serif;writing-mode:vertical-rl;text-orientation:sideways;line-height:14px;white-space:pre;transform:rotate(180deg);-webkit-text-stroke:0.3px currentColor;">项目</div>
<svg style="position:absolute;left:4px;top:28px" width="11" height="10" viewBox="0 0 11 10"><path d="M0 0 H4 L5 1.5 H11 V10 H0 Z" fill="#c9c9c9"/></svg>
<div style="position:absolute;left:2px;top:55px;color:#bbbbbb;font-size:10px;font-family:'Liberation Sans', sans-serif;writing-mode:vertical-rl;text-orientation:sideways;line-height:14px;white-space:pre;transform:rotate(180deg);">提交</div>
<svg style="position:absolute;left:2px;top:78px" width="14" height="11" viewBox="0 0 14 11"><circle cx="7" cy="5.5" r="3" fill="none" stroke="#c9c9c9" stroke-width="1.7"/><path d="M0 5.5 H3.5 M10.5 5.5 H14" stroke="#c9c9c9" stroke-width="1.7"/></svg>
<div style="position:absolute;left:2px;top:106px;color:#bbbbbb;font-size:10px;font-family:'Liberation Sans', sans-serif;writing-mode:vertical-rl;text-orientation:sideways;line-height:14px;white-space:pre;transform:rotate(180deg);">拉取请求</div>
<svg style="position:absolute;left:4px;top:151px" width="11" height="11" viewBox="0 0 11 11"><path d="M1 0 V11 M1 10 H10 M1 1 H4 M9 2 V10 M6 4 L9 1.5 L11 4" stroke="#c9c9c9" stroke-width="1.8" fill="none"/></svg>
<div style="position:absolute;left:2px;top:745px;color:#bbbbbb;font-size:10px;font-family:'Liberation Sans', sans-serif;writing-mode:vertical-rl;text-orientation:sideways;line-height:14px;white-space:pre;transform:rotate(180deg);">书签</div>
<svg style="position:absolute;left:4px;top:769px" width="10" height="11" viewBox="0 0 10 11"><path d="M0 0 H10 V11 L5 7.5 L0 11 Z" fill="#c9c9c9"/></svg>
<div style="position:absolute;left:2px;top:796px;color:#e0e0e0;font-size:10px;font-family:'Liberation Sans', sans-serif;writing-mode:vertical-rl;text-orientation:sideways;line-height:14px;white-space:pre;transform:rotate(180deg);-webkit-text-stroke:0.3px currentColor;">结构</div>
<svg style="position:absolute;left:4px;top:820px" width="10" height="10" viewBox="0 0 10 10"><rect x="5.5" y="0" width="4" height="4" fill="#c9c9c9"/><rect x="0" y="5.5" width="4" height="4" fill="#c9c9c9"/><rect x="5.5" y="5.5" width="4" height="4" fill="#c9c9c9"/></svg>
<svg style="position:absolute;left:1549px;top:4px" width="14" height="14" viewBox="0 0 14 14"><path d="M7 0 L14 3.5 V10.5 L7 14 L0 10.5 V3.5 Z" fill="#e8c04a"/><path d="M7 0 L14 3.5 L7 7 L0 3.5 Z" fill="#b85f8a"/><path d="M14 3.5 V10.5 L7 14 V7 Z" fill="#6a4fa0"/></svg>
<div style="position:absolute;left:1549px;top:21px;color:#c9c9c9;font-size:10.5px;font-family:'Liberation Sans', sans-serif;writing-mode:vertical-rl;text-orientation:sideways;line-height:14px;white-space:pre;">PlantUML</div>
<div class="t" style="left:1550px;top:82px;color:#c9c9c9;font-size:13px;font-family:'Liberation Sans', sans-serif;font-style:italic;font-weight:bold;letter-spacing:-1px">m</div>
<div style="position:absolute;left:1549px;top:101px;color:#c9c9c9;font-size:10.5px;font-family:'Liberation Sans', sans-serif;writing-mode:vertical-rl;text-orientation:sideways;line-height:14px;white-space:pre;">Maven</div>
<svg style="position:absolute;left:1550px;top:150px" width="14" height="14" viewBox="0 0 14 14"><path d="M2 10 V6 A5 5 0 0 1 12 6 V10 L13 11 H1 Z" fill="#c9c9c9"/><circle cx="7" cy="12.5" r="1.5" fill="#c9c9c9"/><circle cx="11.5" cy="2.5" r="2.5" fill="#e05555"/></svg>
<div style="position:absolute;left:1549px;top:165px;color:#c9c9c9;font-size:11px;font-family:'Liberation Sans', sans-serif;writing-mode:vertical-rl;text-orientation:sideways;line-height:14px;white-space:pre;">通知</div>
<svg style="position:absolute;left:1555px;top:235px" width="9" height="57" viewBox="0 0 9 57"><rect x="1" y="0.75" width="12" height="55.5" rx="4.5" fill="#2b2b2b" stroke="#9a9a9a" stroke-width="1.5"/><rect x="2.5" y="31" width="9" height="23.5" rx="3.5" fill="#4fcb55"/></svg>
<svg style="position:absolute;left:1420px;top:698px" width="95" height="84" viewBox="0 0 95 84"><path d="M30.5 5.5 L37.5 13.4 M61.8 5.5 L54.3 13.4" stroke="#d4d4d4" stroke-width="7.6" stroke-linecap="round"/><path d="M21 12.6 H70.7 C83 12.6 86.3 16 86.3 31 V60 C86.3 75 83 78.6 70.7 78.6 H21 C8.7 78.6 5.4 75 5.4 60 V31 C5.4 16 8.7 12.6 21 12.6 Z" fill="#d4d4d4"/><path d="M36.2 34.2 L36.2 58.6 L58.8 46.2 Z" fill="#2b2b2b" stroke="#2b2b2b" stroke-width="6.4" stroke-linejoin="round"/></svg>
<div style="position:absolute;left:1426px;top:798px;width:138px;height:28px;background:#fcfcfc;border-radius:0 0 0 0"></div>
<svg style="position:absolute;left:1407px;top:793px" width="34" height="34" viewBox="0 0 34 34"><circle cx="17" cy="17" r="16.3" fill="#3a84ee"/><text x="5" y="23" font-family="Liberation Sans" font-style="italic" font-weight="bold" font-size="16" fill="#fff" letter-spacing="-1">du</text></svg>
<div class="t" style="left:1449px;top:802px;color:#3476db;font-size:14px;font-weight:bold">英</div>
<svg style="position:absolute;left:1476px;top:806px" width="12" height="12" viewBox="0 0 12 12"><circle cx="2" cy="3" r="1.3" fill="#3476db"/><path d="M9 5 C10 6 10 9 7 11" stroke="#3476db" stroke-width="2" fill="none"/></svg>
<svg style="position:absolute;left:1496px;top:803px" width="17" height="17" viewBox="0 0 17 17"><path d="M1 1 H12 V10 H1 Z" stroke="#3476db" stroke-width="1.8" fill="none"/><path d="M12 3 H14 A2 2 0 0 1 14 8 H12" stroke="#3476db" stroke-width="1.5" fill="none"/><path d="M0 15 H14" stroke="#3476db" stroke-width="1.8"/></svg>
<svg style="position:absolute;left:1520px;top:803px" width="16" height="17" viewBox="0 0 16 17"><circle cx="8" cy="5" r="4" stroke="#3476db" stroke-width="1.8" fill="none"/><path d="M1 16 C2 10 5 9 8 9 C11 9 14 10 15 16 Z" stroke="#3476db" stroke-width="1.8" fill="none"/></svg>
<svg style="position:absolute;left:1545px;top:805px" width="15" height="15" viewBox="0 0 15 15"><rect x="1" y="1" width="5" height="5" stroke="#3476db" stroke-width="1.8" fill="none"/><rect x="9" y="1" width="5" height="5" stroke="#3476db" stroke-width="1.8" fill="none"/><rect x="1" y="9" width="5" height="5" stroke="#3476db" stroke-width="1.8" fill="none"/><rect x="9" y="9" width="5" height="5" stroke="#3476db" stroke-width="1.8" fill="none"/></svg>
</body></html>
